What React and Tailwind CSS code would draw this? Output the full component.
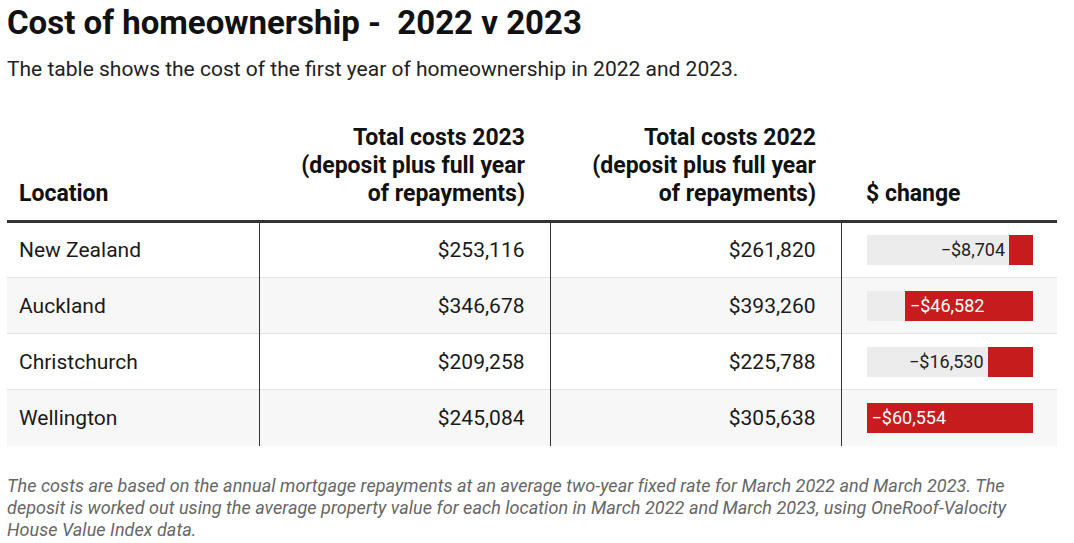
import React from 'react';

const rows = [
  { location: 'New Zealand', y2023: '$253,116', y2022: '$261,820', change: 8704 },
  { location: 'Auckland', y2023: '$346,678', y2022: '$393,260', change: 46582 },
  { location: 'Christchurch', y2023: '$209,258', y2022: '$225,788', change: 16530 },
  { location: 'Wellington', y2023: '$245,084', y2022: '$305,638', change: 60554 },
];

const MAX = 60554;

const fmt = (n) => '\u2212$' + n.toLocaleString('en-US');

const ChangeBar = ({ value }) => {
  const pct = (value / MAX) * 100;
  const inside = pct > 50;
  return (
    <div className="flex h-[30px] w-full bg-[#ececec]">
      {!inside && (
        <div className="flex flex-1 items-center justify-end pr-[4px] text-[#222]">{fmt(value)}</div>
      )}
      <div
        className="ml-auto flex h-full shrink-0 items-center bg-[#c71c1e] pl-[5px] text-white"
        style={{ width: pct + '%' }}
      >
        {inside && fmt(value)}
      </div>
    </div>
  );
};

const App = () => {
  return (
    <div className="min-h-screen bg-white px-[7px] text-[#111]" style={{ fontFamily: 'Roboto, sans-serif' }}>
      <h1 className="pt-[3px] text-[33px] font-bold leading-[40px]">
        Cost of homeownership -&nbsp; 2022 v 2023
      </h1>
      <p className="mt-[14px] text-[21px] leading-[24px] text-[#222]">
        The table shows the cost of the first year of homeownership in 2022 and 2023.
      </p>

      <table className="mt-[43px] w-[1050px] table-fixed border-collapse text-[21px]">
        <colgroup>
          <col className="w-[252px]" />
          <col className="w-[291px]" />
          <col className="w-[291px]" />
          <col className="w-[216px]" />
        </colgroup>
        <thead>
          <tr className="border-b-[3px] border-[#333] text-[23px]">
            <th className="px-[12px] pb-[12px] text-left align-bottom font-bold leading-[28px]">Location</th>
            <th className="pr-[25px] pb-[12px] text-right align-bottom font-bold leading-[28px]">
              Total costs 2023
              <br />
              (deposit plus full year
              <br />
              of repayments)
            </th>
            <th className="pr-[25px] pb-[12px] text-right align-bottom font-bold leading-[28px]">
              Total costs 2022
              <br />
              (deposit plus full year
              <br />
              of repayments)
            </th>
            <th className="pl-[25px] pb-[12px] text-left align-bottom font-bold leading-[28px]">$ change</th>
          </tr>
        </thead>
        <tbody>
          {rows.map((r, i) => (
            <tr
              key={r.location}
              className={(i % 2 === 1 ? 'bg-[#f7f7f7] ' : 'bg-white ') + 'h-[56px] border-b border-[#e4e4e4] last:border-b-0'}
            >
              <td className="px-[12px] align-middle leading-[24px] text-[#1a1a1a]">{r.location}</td>
              <td className="border-x border-[#333] pr-[25px] text-right align-middle leading-[24px] text-[#1a1a1a]">
                {r.y2023}
              </td>
              <td className="border-r border-[#333] pr-[25px] text-right align-middle leading-[24px] text-[#1a1a1a]">
                {r.y2022}
              </td>
              <td className="pl-[25px] pr-[24px] align-middle text-[18px] leading-[24px]">
                <ChangeBar value={r.change} />
              </td>
            </tr>
          ))}
        </tbody>
      </table>

      <p className="mt-[29px] w-[1020px] text-[18px] italic leading-[22px] tracking-[0.05px] text-[#666]">
        The costs are based on the annual mortgage repayments at an average two-year fixed rate for March 2022 and
        March 2023. The deposit is worked out using the average property value for each location in March 2022 and
        March 2023, using OneRoof-Valocity House Value Index data.
      </p>
    </div>
  );
};

export default App;
